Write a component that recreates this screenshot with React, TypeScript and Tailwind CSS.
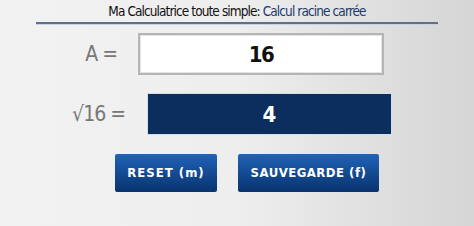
import React from 'react';

const font = { fontFamily: '"DejaVu Sans Condensed", "Liberation Sans", sans-serif' };

export default function App() {
  return (
    <div
      className="w-[474px] h-[226px] overflow-hidden bg-gradient-to-r from-[#f2f2f2] via-[#eeeeee] to-[#d5d5d5] flex flex-col"
      style={font}
    >
      {/* Header */}
      <div className="h-[22px] flex items-center justify-center pt-[2px] text-[13.5px] tracking-[-0.9px] leading-none text-[#111] whitespace-nowrap">
        <span>Ma Calculatrice toute simple:&nbsp;</span>
        <span className="text-[#1c3a6b]">Calcul racine carrée</span>
      </div>
      <div className="mx-[36px] h-[3px] bg-[#5d718d] border-b border-[#c9d2de]" />

      {/* Input row */}
      <div className="flex items-center mt-[8px]">
        <div className="w-[117px] text-right text-[21px] tracking-[-1px] text-[#777] leading-none whitespace-nowrap">A =</div>
        <div className="ml-[21px] w-[246px] h-[42px] bg-white border-2 border-[#b5b5b5] shadow-[inset_0_0_0_1px_#e4e4e4] flex items-center justify-center text-[22px] font-bold tracking-[-1.5px] text-[#111]">
          16
        </div>
      </div>

      {/* Result row */}
      <div className="flex items-center mt-[18px]">
        <div className="w-[125px] text-right text-[21px] tracking-[-1px] text-[#777] leading-none whitespace-nowrap">√16 =</div>
        <div className="ml-[22px] w-[245px] h-[42px] bg-[#0b2e5f] border border-[#d8dde4] flex items-center justify-center text-[22px] font-bold text-white">
          4
        </div>
      </div>

      {/* Buttons */}
      <div className="flex mt-[19px] pl-[115px] gap-[21px]">
        <button className="w-[102px] h-[38px] rounded-[2px] bg-gradient-to-b from-[#2063b8] to-[#08346f] text-white font-bold text-[13px] tracking-[1px] whitespace-nowrap flex items-center justify-center">
          RESET (m)
        </button>
        <button className="w-[141px] h-[38px] rounded-[2px] bg-gradient-to-b from-[#2063b8] to-[#08346f] text-white font-bold text-[13px] tracking-[0.5px] whitespace-nowrap flex items-center justify-center">
          SAUVEGARDE (f)
        </button>
      </div>
    </div>
  );
}
